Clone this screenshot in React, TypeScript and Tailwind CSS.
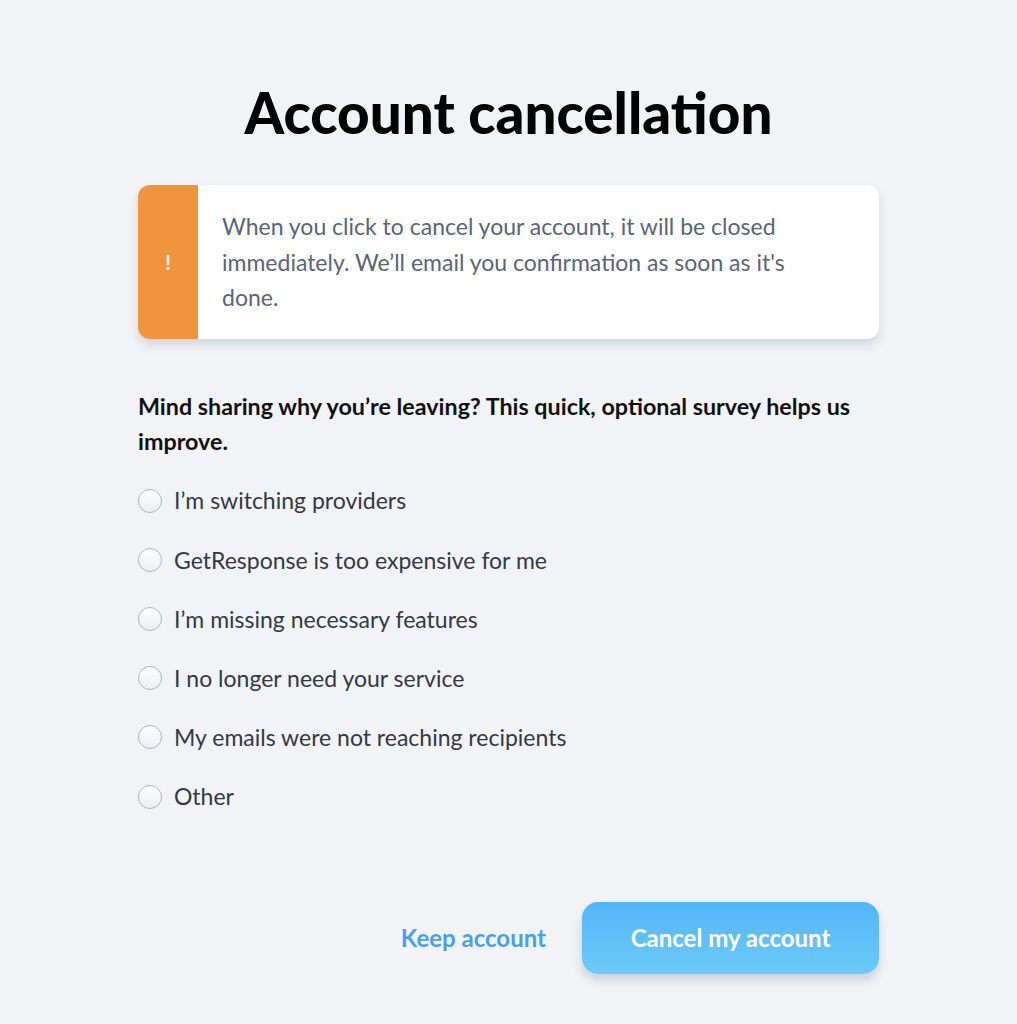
const reasons = [
  "I’m switching providers",
  "GetResponse is too expensive for me",
  "I’m missing necessary features",
  "I no longer need your service",
  "My emails were not reaching recipients",
  "Other",
];

export default function App() {
  return (
    <div className="min-h-screen w-full bg-[#f2f3f7] font-['Lato',sans-serif]">
      <div className="mx-auto w-[741px] pt-[76px] pb-12">
        <h1 className="text-center text-[56.5px] leading-[72px] font-black text-black">
          Account cancellation
        </h1>

        <div className="mt-[37px] flex h-[154px] overflow-hidden rounded-xl bg-white shadow-[0_6px_10px_rgba(120,130,150,0.25)]">
          <div className="flex w-[60px] shrink-0 items-center justify-center bg-[#f0953e] text-xl font-bold text-white">
            !
          </div>
          <p className="pl-6 pr-[70px] pt-[24px] text-[23px] leading-[35.5px] text-[#5b6579]">
            When you click to cancel your account, it will be closed immediately. We’ll email you confirmation as soon as it's done.
          </p>
        </div>

        <p className="mt-[50px] text-[23.3px] leading-[35px] font-bold text-[#111]">
          Mind sharing why you’re leaving? This quick, optional survey helps us improve.
        </p>

        <div className="mt-[12px] flex flex-col">
          {reasons.map((r) => (
            <label key={r} className="flex h-[59.2px] items-center gap-3 cursor-pointer">
              <span className="h-6 w-6 shrink-0 rounded-full border border-[#aeb5c0] bg-gradient-to-b from-white to-[#eceef2]" />
              <span className="text-[23px] text-[#333a45]">{r}</span>
            </label>
          ))}
        </div>

        <div className="mt-[76px] flex items-center justify-end gap-9">
          <button className="text-[24px] font-bold text-[#4a9ff0]">Keep account</button>
          <button className="h-[72px] w-[297px] rounded-2xl bg-gradient-to-b from-[#53b5f7] to-[#6ccbf9] text-[24px] font-bold text-white shadow-[0_6px_10px_rgba(120,130,150,0.3)]">
            Cancel my account
          </button>
        </div>
      </div>
    </div>
  );
}
